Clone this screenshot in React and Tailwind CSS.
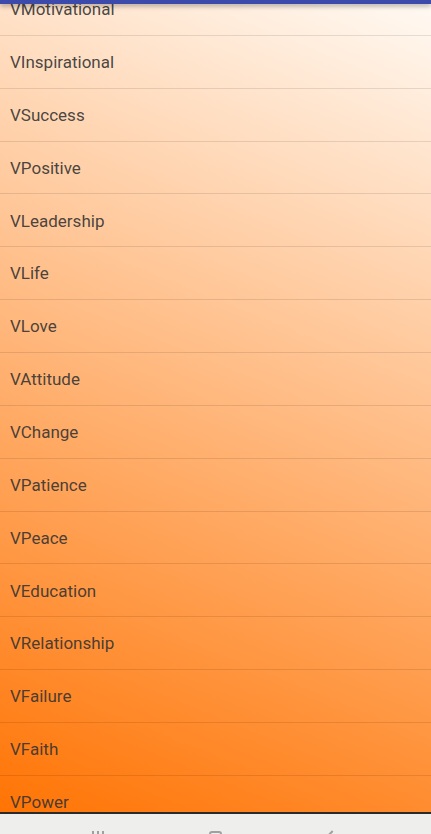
const topics = [
  'VMotivational',
  'VInspirational',
  'VSuccess',
  'VPositive',
  'VLeadership',
  'VLife',
  'VLove',
  'VAttitude',
  'VChange',
  'VPatience',
  'VPeace',
  'VEducation',
  'VRelationship',
  'VFailure',
  'VFaith',
  'VPower',
];

const App = () => {
  return (
    <div className="w-[431px] h-[834px] flex flex-col overflow-hidden bg-[#eeefec]" style={{ fontFamily: 'Roboto, "Noto Sans", sans-serif' }}>
      {/* List area */}
      <div className="relative h-[812px] overflow-hidden bg-[linear-gradient(22deg,#ff7404,#fffaf4)]">
        {/* app bar edge */}
        <div className="absolute top-0 left-0 right-0 h-[4px] bg-[#3b4aab] shadow-[0_2px_5px_rgba(0,0,0,0.35)] z-10" />

        <div className="mt-[-17px]">
          {topics.map((t) => (
            <div
              key={t}
              className="h-[52.86px] flex items-center pl-[10px] pt-[2px] border-b border-black/10 text-[17px] text-[#333333]/90"
            >
              {t}
            </div>
          ))}
        </div>
      </div>

      {/* bottom navigation bar */}
      <div className="h-[2px] bg-[#2a2a2a]" />
      <div className="relative flex-1 bg-[#eeefec]">
        <div className="absolute left-[92px] top-[17px] flex gap-[3px]">
          <div className="w-[2px] h-[8px] bg-[#a0a0a0]" />
          <div className="w-[2px] h-[8px] bg-[#a0a0a0]" />
          <div className="w-[2px] h-[8px] bg-[#a0a0a0]" />
        </div>
        <div className="absolute left-[209px] top-[17px] w-[13px] h-[13px] rounded-[3px] border-2 border-[#a0a0a0]" />
        <div className="absolute left-[328px] top-[18px] w-[8px] h-[8px] border-l-2 border-t-2 border-[#a0a0a0] -rotate-45" />
      </div>
    </div>
  );
};

export default App;
